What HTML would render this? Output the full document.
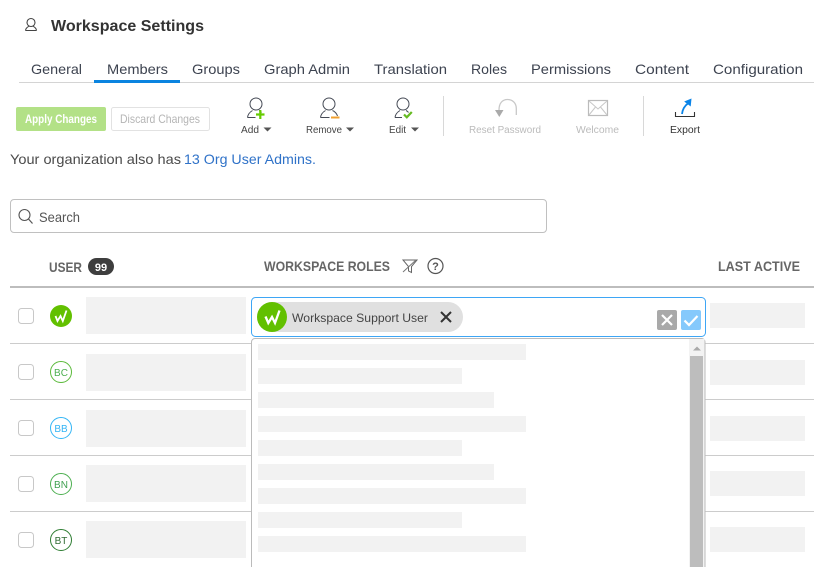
<!DOCTYPE html>
<html><head><meta charset="utf-8"><style>
html,body{margin:0;padding:0;background:#fff;width:814px;height:567px;overflow:hidden}
svg{display:block}
text{font-family:"Liberation Sans",sans-serif}
.tab{font-size:14px;fill:#3d4350}
.tb{font-size:10px;fill:#444}
.dis{font-size:10px;fill:#bbb}
.hd{font-size:14px;font-weight:bold;fill:#666}
.av{font-size:10px;text-anchor:middle}
</style></head><body>
<svg width="814" height="567" viewBox="0 0 814 567" xmlns="http://www.w3.org/2000/svg">
<circle cx="31" cy="22.500" r="4" fill="none" stroke="#444" stroke-width="1.100"/>
<path d="M25.500 30.500c.2-2.200 1.800-3.400 3.300-4.200M36.500 30.500c-.2-2.200-1.800-3.400-3.300-4.200M25.500 30.500h11" fill="none" stroke="#444" stroke-width="1.100"/>
<text x="51" y="31" font-size="16" font-weight="bold" fill="#333" textLength="153" lengthAdjust="spacingAndGlyphs">Workspace Settings</text>

<text class="tab" x="31" y="74" textLength="51" lengthAdjust="spacingAndGlyphs">General</text>
<text class="tab" x="107" y="74" textLength="61" lengthAdjust="spacingAndGlyphs">Members</text>
<text class="tab" x="192" y="74" textLength="48" lengthAdjust="spacingAndGlyphs">Groups</text>
<text class="tab" x="264" y="74" textLength="86" lengthAdjust="spacingAndGlyphs">Graph Admin</text>
<text class="tab" x="374" y="74" textLength="73" lengthAdjust="spacingAndGlyphs">Translation</text>
<text class="tab" x="471" y="74" textLength="36" lengthAdjust="spacingAndGlyphs">Roles</text>
<text class="tab" x="531" y="74" textLength="80" lengthAdjust="spacingAndGlyphs">Permissions</text>
<text class="tab" x="635" y="74" textLength="54" lengthAdjust="spacingAndGlyphs">Content</text>
<text class="tab" x="713" y="74" textLength="90" lengthAdjust="spacingAndGlyphs">Configuration</text>
<rect x="19" y="82" width="795" height="1" fill="#d4d4d4"/>
<rect x="94" y="80" width="86" height="3" fill="#0a84e0"/>

<rect x="16" y="107" width="90" height="24" rx="2" fill="#b3e187"/>
<text x="25" y="123" font-size="12" font-weight="bold" fill="#fff" textLength="72" lengthAdjust="spacingAndGlyphs">Apply Changes</text>
<rect x="111.500" y="107.500" width="98" height="23" rx="2" fill="#fff" stroke="#e2e2e2"/>
<text x="120" y="123" font-size="12" fill="#b5b5b5" textLength="80" lengthAdjust="spacingAndGlyphs">Discard Changes</text>

<g fill="none" stroke="#454a55" stroke-width="1">
<circle cx="256" cy="104" r="6"/>
<path d="M247.500 117.500c.4-3.500 2.500-5.500 5-7M259 110.500c1 .5 2 1 2.500 2M247.500 117.500h8"/>
<circle cx="329" cy="104" r="6"/>
<path d="M320.500 117.500c.4-3.500 2.500-5.500 5-7M332.500 110.500c2.500 1 4.500 3.500 5 5.500M320.500 117.500h9"/>
<circle cx="403" cy="104" r="6"/>
<path d="M395 117.500c.4-3.500 2.500-5.500 5-7M406 110.500c1 .5 2 1 2.500 2M395 117.500h7"/>
</g>
<path d="M256 114.500h8.500M260.300 110v9" stroke="#66cc00" stroke-width="2.200" fill="none"/>
<path d="M331 117.500h8.500" stroke="#f0a030" stroke-width="2" fill="none"/>
<path d="M404 114.500l2.800 2.800 5-5.300" stroke="#66bb22" stroke-width="2.200" fill="none"/>

<text class="tb" x="241" y="133" textLength="18" lengthAdjust="spacingAndGlyphs">Add</text>
<path d="M263.500 127.500h8l-4 4z" fill="#555"/>
<text class="tb" x="306" y="133" textLength="36" lengthAdjust="spacingAndGlyphs">Remove</text>
<path d="M346 127.500h8l-4 4z" fill="#555"/>
<text class="tb" x="389" y="133" textLength="17" lengthAdjust="spacingAndGlyphs">Edit</text>
<path d="M411 127.500h8l-4 4z" fill="#555"/>

<rect x="443" y="96" width="1" height="40" fill="#d8d8d8"/>
<rect x="643" y="96" width="1" height="40" fill="#d8d8d8"/>

<path d="M499 110c0-7 3.500-10.500 8.500-10.500s8.800 3.500 8.800 9v6.500" fill="none" stroke="#c8c8c8" stroke-width="1.300"/>
<path d="M495 110h8.500l-4.200 7z" fill="#aaa"/>
<text class="dis" x="469" y="133" textLength="72" lengthAdjust="spacingAndGlyphs">Reset Password</text>
<rect x="588.500" y="100.500" width="19" height="15" fill="none" stroke="#bbb" stroke-width="1.200"/>
<path d="M589 101l9 8 9-8M589 115l6.500-8M607 115l-6.500-8" fill="none" stroke="#c8c8c8"/>
<text class="dis" x="576" y="133" textLength="43" lengthAdjust="spacingAndGlyphs">Welcome</text>
<path d="M675.500 112v4.500h19V112" fill="none" stroke="#333" stroke-width="1.100"/>
<path d="M682 114c.5-5 3-8.500 6.500-11" fill="none" stroke="#0a84e8" stroke-width="1.800"/>
<path d="M691.500 98.500l-.8 8-6.500-5z" fill="#0a84e8"/>
<text class="tb" x="670" y="133" textLength="30" lengthAdjust="spacingAndGlyphs" style="fill:#333">Export</text>

<text x="10" y="164" font-size="14" fill="#4a4a4a" textLength="171" lengthAdjust="spacingAndGlyphs">Your organization also has</text>
<text x="184" y="164" font-size="14" fill="#2f72c8" textLength="132" lengthAdjust="spacingAndGlyphs">13 Org User Admins.</text>

<rect x="10.500" y="199.500" width="536" height="33" rx="3.500" fill="#fff" stroke="#c0c0c0"/>
<circle cx="24.500" cy="215" r="5.500" fill="none" stroke="#555" stroke-width="1.100"/>
<path d="M28.500 219l4 4.500" stroke="#555" stroke-width="1.200"/>
<text x="39" y="222" font-size="14" fill="#555" textLength="41" lengthAdjust="spacingAndGlyphs">Search</text>

<text class="hd" x="49" y="272" textLength="33" lengthAdjust="spacingAndGlyphs">USER</text>
<rect x="88" y="258" width="26" height="17" rx="8.500" fill="#3e3e3e"/>
<text x="101" y="271" font-size="11" font-weight="bold" fill="#fff" text-anchor="middle">99</text>
<text class="hd" x="264" y="271" textLength="126" lengthAdjust="spacingAndGlyphs">WORKSPACE ROLES</text>
<path d="M403 260h14l-5.500 6.500v6l-3-1.500v-4.500z" fill="none" stroke="#666" stroke-width="1"/>
<path d="M403 272l13-12" stroke="#777" stroke-width="1"/>
<circle cx="435.500" cy="266" r="7.500" fill="none" stroke="#555" stroke-width="1.200"/>
<text x="435.500" y="270" font-size="11" font-weight="bold" fill="#555" text-anchor="middle">?</text>
<text class="hd" x="718" y="271" textLength="82" lengthAdjust="spacingAndGlyphs">LAST ACTIVE</text>
<rect x="10" y="286" width="804" height="2" fill="#bdbdbd"/>

<g fill="#ccc">
<rect x="10" y="343" width="804" height="1"/>
<rect x="10" y="399" width="804" height="1"/>
<rect x="10" y="455" width="804" height="1"/>
<rect x="10" y="511" width="804" height="1"/>
</g>

<g fill="#fff" stroke="#c8c8c8" stroke-width="1">
<rect x="18.500" y="308.500" width="15" height="15" rx="3"/>
<rect x="18.500" y="364.500" width="15" height="15" rx="3"/>
<rect x="18.500" y="420.500" width="15" height="15" rx="3"/>
<rect x="18.500" y="476.500" width="15" height="15" rx="3"/>
<rect x="18.500" y="532.500" width="15" height="15" rx="3"/>
</g>

<circle cx="61" cy="316" r="11" fill="#62c000"/>
<path d="M55.500 316l2 5 3-5 2.300 5 3.700-10.500" fill="none" stroke="#fff" stroke-width="1.800"/>
<circle cx="61" cy="372" r="10.500" fill="#fff" stroke="#5cba3c"/>
<text class="av" x="61" y="376" fill="#4caf50">BC</text>
<circle cx="61" cy="428" r="10.500" fill="#fff" stroke="#33b5f5"/>
<text class="av" x="61" y="432" fill="#33b5f5">BB</text>
<circle cx="61" cy="484" r="10.500" fill="#fff" stroke="#4caf50"/>
<text class="av" x="61" y="488" fill="#3f9f50">BN</text>
<circle cx="61" cy="540" r="10.500" fill="#fff" stroke="#2e7d32"/>
<text class="av" x="61" y="544" fill="#2e6b32">BT</text>

<g fill="#f2f2f2">
<rect x="86" y="297" width="160" height="37"/>
<rect x="86" y="354" width="160" height="37"/>
<rect x="86" y="410" width="160" height="37"/>
<rect x="86" y="465" width="160" height="37"/>
<rect x="86" y="521" width="160" height="37"/>
<rect x="710" y="303" width="95" height="25"/>
<rect x="710" y="360" width="95" height="25"/>
<rect x="710" y="416" width="95" height="25"/>
<rect x="710" y="471" width="95" height="25"/>
<rect x="710" y="527" width="95" height="25"/>
</g>

<rect x="251.500" y="297.500" width="454" height="39" rx="4" fill="#fff" stroke="#3ea6f5"/>
<rect x="257" y="302" width="206" height="30" rx="15" fill="#e0e0e0"/>
<circle cx="272" cy="317" r="15" fill="#62c000"/>
<path d="M265.500 316.500l2.800 6.500 3.700-6 3 6 4.500-12.500" fill="none" stroke="#fff" stroke-width="2.300"/>
<text x="292" y="322" font-size="12" fill="#444" textLength="136" lengthAdjust="spacingAndGlyphs">Workspace Support User</text>
<path d="M441 312l10 10M451 312l-10 10" stroke="#333" stroke-width="2"/>
<rect x="657" y="310" width="20" height="20" rx="2" fill="#a9a9a9"/>
<path d="M662 315l10 10M672 315l-10 10" stroke="#fff" stroke-width="2.200"/>
<rect x="681" y="310" width="20" height="20" rx="2" fill="#85c9fc"/>
<path d="M684.500 320.500l4.500 4.500 8.500-9" fill="none" stroke="#fff" stroke-width="2.200"/>

<path d="M251.500 567V342a3.500 3.500 0 0 1 3.500-3.500h446.500a3.500 3.500 0 0 1 3.500 3.500V567" fill="#fff" stroke="#bbb"/>
<g fill="#f2f2f2">
<rect x="258" y="344" width="268" height="16"/>
<rect x="258" y="368" width="204" height="16"/>
<rect x="258" y="392" width="236" height="16"/>
<rect x="258" y="416" width="268" height="16"/>
<rect x="258" y="440" width="204" height="16"/>
<rect x="258" y="464" width="236" height="16"/>
<rect x="258" y="488" width="268" height="16"/>
<rect x="258" y="512" width="204" height="16"/>
<rect x="258" y="536" width="268" height="16"/>
</g>
<rect x="689" y="339" width="15.500" height="228" fill="#f3f3f3"/>
<rect x="690" y="356" width="13" height="211" fill="#bdbdbd"/>
<path d="M693 350.500h8l-4-4z" fill="#aaa"/>
</svg>
</body></html>
